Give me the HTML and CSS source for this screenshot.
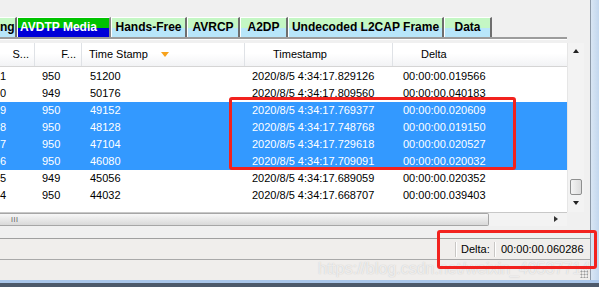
FILE: index.html
```html
<!DOCTYPE html>
<html lang="en">
<head>
<meta charset="UTF-8" />
<title>AVDTP Media frames</title>
<link rel="stylesheet" href="styles.css">
</head>
<body>
  <div class="window">
    <div class="client">
      <div class="tabs">
        <div class="tab tab-cut">ng</div>
        <div class="tab active">AVDTP Media</div>
        <div class="tab tab-hf">Hands-Free</div>
        <div class="tab tab-avrcp">AVRCP</div>
        <div class="tab tab-a2dp">A2DP</div>
        <div class="tab tab-l2cap">Undecoded L2CAP Frame</div>
        <div class="tab tab-data">Data</div>
      </div>

      <div class="list-area">
        <div class="list-head">
          <div class="hcell c0 right">S...</div>
          <div class="hcell c1 right">F...</div>
          <div class="hcell c2">Time Stamp <span class="sort"></span></div>
          <div class="hcell c3">Timestamp</div>
          <div class="hcell c4">Delta</div>
        </div>

        <div class="list-body">
          <div class="row"><span>1</span><span>950</span><span>51200</span><span>2020/8/5 4:34:17.829126</span><span>00:00:00.019566</span></div>
          <div class="row"><span>0</span><span>949</span><span>50176</span><span>2020/8/5 4:34:17.809560</span><span>00:00:00.040183</span></div>
          <div class="row selected"><span>9</span><span>950</span><span>49152</span><span>2020/8/5 4:34:17.769377</span><span>00:00:00.020609</span></div>
          <div class="row selected"><span>8</span><span>950</span><span>48128</span><span>2020/8/5 4:34:17.748768</span><span>00:00:00.019150</span></div>
          <div class="row selected"><span>7</span><span>950</span><span>47104</span><span>2020/8/5 4:34:17.729618</span><span>00:00:00.020527</span></div>
          <div class="row selected"><span>6</span><span>950</span><span>46080</span><span>2020/8/5 4:34:17.709091</span><span>00:00:00.020032</span></div>
          <div class="row"><span>5</span><span>949</span><span>45056</span><span>2020/8/5 4:34:17.689059</span><span>00:00:00.020352</span></div>
          <div class="row"><span>4</span><span>950</span><span>44032</span><span>2020/8/5 4:34:17.668707</span><span>00:00:00.039403</span></div>
        </div>

        <div class="vscroll">
          <div class="arrow-up"></div>
          <div class="vtrack"><div class="vthumb"></div></div>
          <div class="arrow-down"></div>
        </div>

        <div class="hscroll">
          <div class="hthumb"><span class="grip">III</span></div>
          <div class="arrow-right"></div>
        </div>
        <div class="corner"></div>
      </div>

      <div class="status">
        <div class="panel label">Delta:</div>
        <div class="panel value">00:00:00.060286</div>
      </div>
      <div class="status status-2">
        <div class="watermark">https://blog.csdn.net/weixin_40537714</div>
        <div class="size-grip"></div>
      </div>
    </div>
    <div class="frame-right"></div>
  </div>
  <div class="frame-bottom"></div>

  <!-- red annotation boxes drawn over the screenshot -->
  <div class="mark mark-rows"></div>
  <div class="mark mark-status"></div>
</body>
</html>
```

FILE: styles.css
```css
* {
  box-sizing: border-box;
}
html, body {
  margin: 0;
  padding: 0;
}
body {
  position: relative;
  width: 599px;
  height: 287px;
  overflow: hidden;
  background: #f0f0f0;
  font-family: "Liberation Sans", Arial, sans-serif;
  font-size: 11px;
  color: #000;
}

.window {
  display: flex;
  height: 280px;
}
.client {
  width: 590px;
  display: flex;
  flex-direction: column;
}
.frame-right {
  flex: 1;
  border-left: 1px solid #8d99a8;
  background: linear-gradient(90deg, #d9e6f4, #c3d7ee);
}
.frame-bottom {
  height: 7px;
  border-top: 3px solid #a9c6ea;
  background: #4d5a6b;
}

/* Tabs */
.tabs {
  display: flex;
  width: 567px;
  height: 39px;
  padding-top: 17px;
  border-bottom: 2px solid #9c9c9c;
  box-shadow: 0 1px 0 #fff;
  margin-bottom: 4px;
  overflow: hidden;
}
.tab {
  flex: none;
  height: 20px;
  font-weight: bold;
  font-size: 12px;
  line-height: 18px;
  text-align: center;
  white-space: nowrap;
  background: linear-gradient(180deg, #c4f7c4 0, #c4f7c4 10px, #b8e6fa 10px);
  border-left: 1px solid #fff;
  border-top: 1px solid #fff;
  border-right: 2px solid #6e6e6e;
}
.tab-cut {
  width: 17px;
  text-align: left;
  border-left: none;
}
.tab.active {
  width: 94px;
  padding-left: 2px;
  text-align: left;
  color: #fff;
  background: linear-gradient(180deg, #00c300 0, #00c300 10px, #0000d8 10px);
  border-right-color: #8a8a8a;
}
.tab-hf { width: 76px; }
.tab-avrcp { width: 53px; }
.tab-a2dp { width: 48px; }
.tab-l2cap { width: 156px; }
.tab-data { width: 48px; }

/* List view */
.list-area {
  display: grid;
  grid-template-columns: 567px 17px;
  grid-template-rows: 24px 145px 14px;
  width: 584px;
}
.list-head {
  display: grid;
  grid-template-columns: 35px 47px 163px 148px 174px;
  background: linear-gradient(180deg, #fff 0, #fff 45%, #f2f3f5 100%);
  border-bottom: 1px solid #d5d5d5;
}
.hcell {
  line-height: 23px;
  border-right: 1px solid #dfe2e6;
  white-space: nowrap;
}
.hcell.right {
  text-align: right;
  padding-right: 5px;
}
.hcell.c2 { padding-left: 7px; }
.hcell.c3, .hcell.c4 { padding-left: 28px; }
.hcell.c4 { border-right: none; }
.sort {
  display: inline-block;
  margin-left: 10px;
  vertical-align: 1px;
  border-left: 4px solid transparent;
  border-right: 4px solid transparent;
  border-top: 5px solid #f7a21b;
}

.list-body {
  background: #fff;
  padding-top: 1px;
}
.row {
  display: grid;
  grid-template-columns: 35px 47px 163px 148px 174px;
  height: 17px;
  line-height: 17px;
  white-space: nowrap;
}
.row span:nth-child(2) { padding-left: 7px; }
.row span:nth-child(3) { padding-left: 8px; }
.row span:nth-child(4) { padding-left: 7px; }
.row span:nth-child(5) { padding-left: 10px; }
.row.selected {
  background: #3399ff;
  color: #fff;
}

/* Scroll bars */
.vscroll {
  grid-column: 2;
  grid-row: 1 / 3;
  display: flex;
  flex-direction: column;
  background: #f3f3f3;
  border-left: 1px solid #e6e6e6;
}
.arrow-up, .arrow-down {
  height: 17px;
  display: flex;
  justify-content: center;
  align-items: center;
}
.arrow-up::before, .arrow-down::before, .arrow-right::before {
  content: '';
  border: 3.5px solid transparent;
}
.arrow-up::before {
  border-bottom: 4px solid #222;
  border-top: none;
}
.arrow-down::before {
  border-top: 4px solid #222;
  border-bottom: none;
}
.vtrack {
  flex: 1;
  display: flex;
  flex-direction: column;
  justify-content: flex-end;
  padding: 0 2px;
}
.vthumb {
  height: 16px;
  border: 1px solid #8e8f8f;
  border-radius: 2px;
  background: linear-gradient(90deg, #f4f4f4, #dcdcdc);
}
.hscroll {
  grid-column: 1;
  grid-row: 3;
  display: flex;
  align-items: center;
  background: #f3f3f3;
  border-top: 1px solid #c8c8c8;
}
.hthumb {
  width: 489px;
  height: 13px;
  border: 1px solid #a6a6a6;
  border-left: none;
  border-radius: 0 2px 2px 0;
  background: linear-gradient(180deg, #f7f7f7, #d9d9d9);
  font-size: 7px;
  line-height: 11px;
  color: #555;
  padding-left: 11px;
  letter-spacing: 0.5px;
}
.arrow-right {
  margin-left: auto;
  width: 17px;
  display: flex;
  justify-content: center;
  margin-right: 3px;
}
.arrow-right::before {
  border-left: 4px solid #333;
  border-right: none;
}
.corner {
  grid-column: 2;
  grid-row: 3;
  background: #f0f0f0;
}

/* Status bars */
.status {
  position: relative;
  display: flex;
  justify-content: flex-end;
  align-items: center;
  margin-top: 12px;
  height: 22px;
  background: #f0eeec;
  border-top: 1px solid #a0a0a0;
  padding-right: 2px;
}
.panel {
  height: 15px;
  line-height: 15px;
  border-left: 1px solid #c8c6c4;
  box-shadow: inset 1px 0 0 #fff;
  white-space: nowrap;
}
.panel.label {
  width: 39px;
  padding-left: 5px;
}
.panel.value {
  width: 94px;
  padding-left: 6px;
}
.status-2 {
  margin-top: 0;
  height: 21px;
  border-top-color: #a9a9a9;
}
.watermark {
  position: absolute;
  left: 318px;
  top: 0;
  font-size: 16px;
  line-height: 18px;
  color: rgba(255, 255, 255, 0.7);
  text-shadow: 0 0 1px rgba(140, 140, 140, 0.5);
  white-space: nowrap;
}
.size-grip {
  position: absolute;
  right: 2px;
  bottom: 2px;
  width: 8px;
  height: 8px;
  background: radial-gradient(circle, #9a9a9a 0.8px, transparent 1.2px) 0 0 / 3px 3px;
}

/* Red annotation boxes */
.mark {
  position: absolute;
  border: 3px solid #f2221e;
  border-radius: 3px;
}
.mark-rows {
  left: 229px;
  top: 97px;
  width: 287px;
  height: 73px;
}
.mark-status {
  left: 437px;
  top: 230px;
  width: 160px;
  height: 39px;
}
```
